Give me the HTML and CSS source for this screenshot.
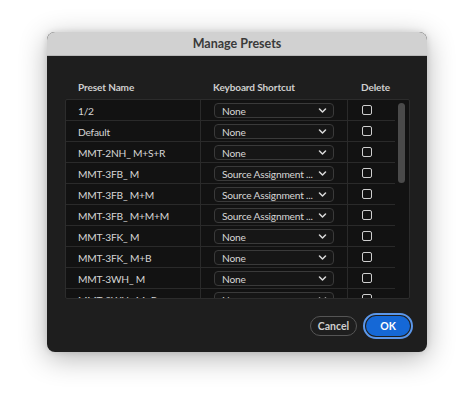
FILE: index.html
```html
<!DOCTYPE html>
<html>
<head>
<meta charset="utf-8">
<link rel="stylesheet" href="styles.css">
</head>
<body>
<div class="stage">
  <div class="dialog">
    <div class="titlebar">Manage Presets</div>
    <div class="content">
      <div class="headers">
        <div class="h-name">Preset Name</div>
        <div class="h-key">Keyboard Shortcut</div>
        <div class="h-del">Delete</div>
      </div>
      <div class="table">
        <div class="rows">
          <div class="row"><div class="c-name">1/2</div><div class="c-key"><div class="select"><span>None</span><svg class="chev" viewBox="0 0 8 5"><path d="M1 1 L4 4 L7 1"/></svg></div></div><div class="c-del"><span class="cb"></span></div></div>
          <div class="row"><div class="c-name">Default</div><div class="c-key"><div class="select"><span>None</span><svg class="chev" viewBox="0 0 8 5"><path d="M1 1 L4 4 L7 1"/></svg></div></div><div class="c-del"><span class="cb"></span></div></div>
          <div class="row"><div class="c-name">MMT-2NH_ M+S+R</div><div class="c-key"><div class="select"><span>None</span><svg class="chev" viewBox="0 0 8 5"><path d="M1 1 L4 4 L7 1"/></svg></div></div><div class="c-del"><span class="cb"></span></div></div>
          <div class="row"><div class="c-name">MMT-3FB_ M</div><div class="c-key"><div class="select"><span>Source Assignment ...</span><svg class="chev" viewBox="0 0 8 5"><path d="M1 1 L4 4 L7 1"/></svg></div></div><div class="c-del"><span class="cb"></span></div></div>
          <div class="row"><div class="c-name">MMT-3FB_ M+M</div><div class="c-key"><div class="select"><span>Source Assignment ...</span><svg class="chev" viewBox="0 0 8 5"><path d="M1 1 L4 4 L7 1"/></svg></div></div><div class="c-del"><span class="cb"></span></div></div>
          <div class="row"><div class="c-name">MMT-3FB_ M+M+M</div><div class="c-key"><div class="select"><span>Source Assignment ...</span><svg class="chev" viewBox="0 0 8 5"><path d="M1 1 L4 4 L7 1"/></svg></div></div><div class="c-del"><span class="cb"></span></div></div>
          <div class="row"><div class="c-name">MMT-3FK_ M</div><div class="c-key"><div class="select"><span>None</span><svg class="chev" viewBox="0 0 8 5"><path d="M1 1 L4 4 L7 1"/></svg></div></div><div class="c-del"><span class="cb"></span></div></div>
          <div class="row"><div class="c-name">MMT-3FK_ M+B</div><div class="c-key"><div class="select"><span>None</span><svg class="chev" viewBox="0 0 8 5"><path d="M1 1 L4 4 L7 1"/></svg></div></div><div class="c-del"><span class="cb"></span></div></div>
          <div class="row"><div class="c-name">MMT-3WH_ M</div><div class="c-key"><div class="select"><span>None</span><svg class="chev" viewBox="0 0 8 5"><path d="M1 1 L4 4 L7 1"/></svg></div></div><div class="c-del"><span class="cb"></span></div></div>
          <div class="row"><div class="c-name">MMT-3WH_ M+B</div><div class="c-key"><div class="select"><span>None</span><svg class="chev" viewBox="0 0 8 5"><path d="M1 1 L4 4 L7 1"/></svg></div></div><div class="c-del"><span class="cb"></span></div></div>
        </div>
        <div class="scroll"><div class="thumb"></div></div>
      </div>
      <div class="buttons">
        <button class="btn cancel">Cancel</button>
        <button class="btn ok">OK</button>
      </div>
    </div>
  </div>
</div>
</body>
</html>
```
FILE: styles.css
```css
* { box-sizing: border-box; }
html, body { margin: 0; padding: 0; background: #ffffff; }
body { font-family: Lato, "Open Sans", sans-serif; }
.stage { padding: 32px 0 0 47px; width: 474px; height: 416px; }
.dialog {
  width: 380px; height: 320px;
  border-radius: 8px;
  background: #1e1e1e;
  overflow: hidden;
  box-shadow: 0 6px 28px rgba(0,0,0,0.30), 0 0 6px rgba(0,0,0,0.12);
  display: flex; flex-direction: column;
}
.titlebar {
  height: 24px; flex: none;
  background: #d1d1d1;
  color: #3a3a3a;
  font-weight: 700; font-size: 12.5px;
  display: flex; align-items: center; justify-content: center;
  border-bottom: 1px solid #b9b9b9;
}
.content { padding: 0 17px 0 18px; flex: 1; display: flex; flex-direction: column; }
.headers {
  height: 43px; flex: none;
  display: grid; grid-template-columns: 135px 147px 1fr;
  align-items: end; padding-bottom: 6px;
  color: #cfcfcf; font-size: 10px; font-weight: 700; letter-spacing: -0.1px;
}
.h-name { padding-left: 13px; }
.h-key { padding-left: 13px; }
.h-del { padding-left: 14px; }
.table {
  height: 200px; flex: none;
  border: 1px solid #2c2c2c;
  background: #121212;
  display: flex; overflow: hidden;
  border-radius: 2px;
}
.rows { flex: 1; overflow: hidden; }
.row {
  height: 21px;
  display: grid; grid-template-columns: 135px 147px 1fr;
  border-bottom: 1px solid #2a2a2a;
  color: #d6d6d6; font-size: 10.2px; letter-spacing: -0.2px;
  white-space: nowrap;
}
.row > div { display: flex; align-items: center; }
.c-name { padding-left: 12px; padding-top: 1px; border-right: 1px solid #2a2a2a; }
.c-key { padding-left: 13px; padding-right: 13px; border-right: 1px solid #2a2a2a; }
.c-del { justify-content: center; padding-right: 9px; }
.select {
  width: 120px; height: 15px;
  border: 1px solid #3a3a3a; border-radius: 4px;
  background: #161616;
  display: flex; align-items: center; justify-content: space-between;
  padding: 1px 6px 0 7px;
  color: #d6d6d6;
  white-space: nowrap; overflow: hidden;
}
.chev { width: 9px; height: 5px; flex: none; margin-top: -1px; fill: none; stroke: #dadada; stroke-width: 1.5; stroke-linecap: round; stroke-linejoin: round; }
.cb {
  width: 10px; height: 10px;
  border: 1.5px solid #cfcfcf; border-radius: 2px;
}
.scroll { width: 14px; flex: none; padding: 3px 3px 0 3px; }
.thumb { width: 7px; height: 80px; border-radius: 4px; background: #4a4a4a; }
.buttons {
  display: flex; justify-content: flex-end; align-items: center;
  gap: 9px; margin-top: 17px;
}
.btn {
  font-family: Lato, "Open Sans", sans-serif;
  height: 20px; border-radius: 10px;
  font-size: 10.5px; font-weight: 700;
  display: flex; align-items: center; justify-content: center;
  padding: 0;
}
.cancel { width: 47px; background: transparent; border: 1.5px solid #555555; color: #cfcfcf; }
.ok {
  width: 44px; background: #1568d6; border: none; color: #ffffff;
  outline: 2px solid #5b97ea; outline-offset: 1px;
}
```
